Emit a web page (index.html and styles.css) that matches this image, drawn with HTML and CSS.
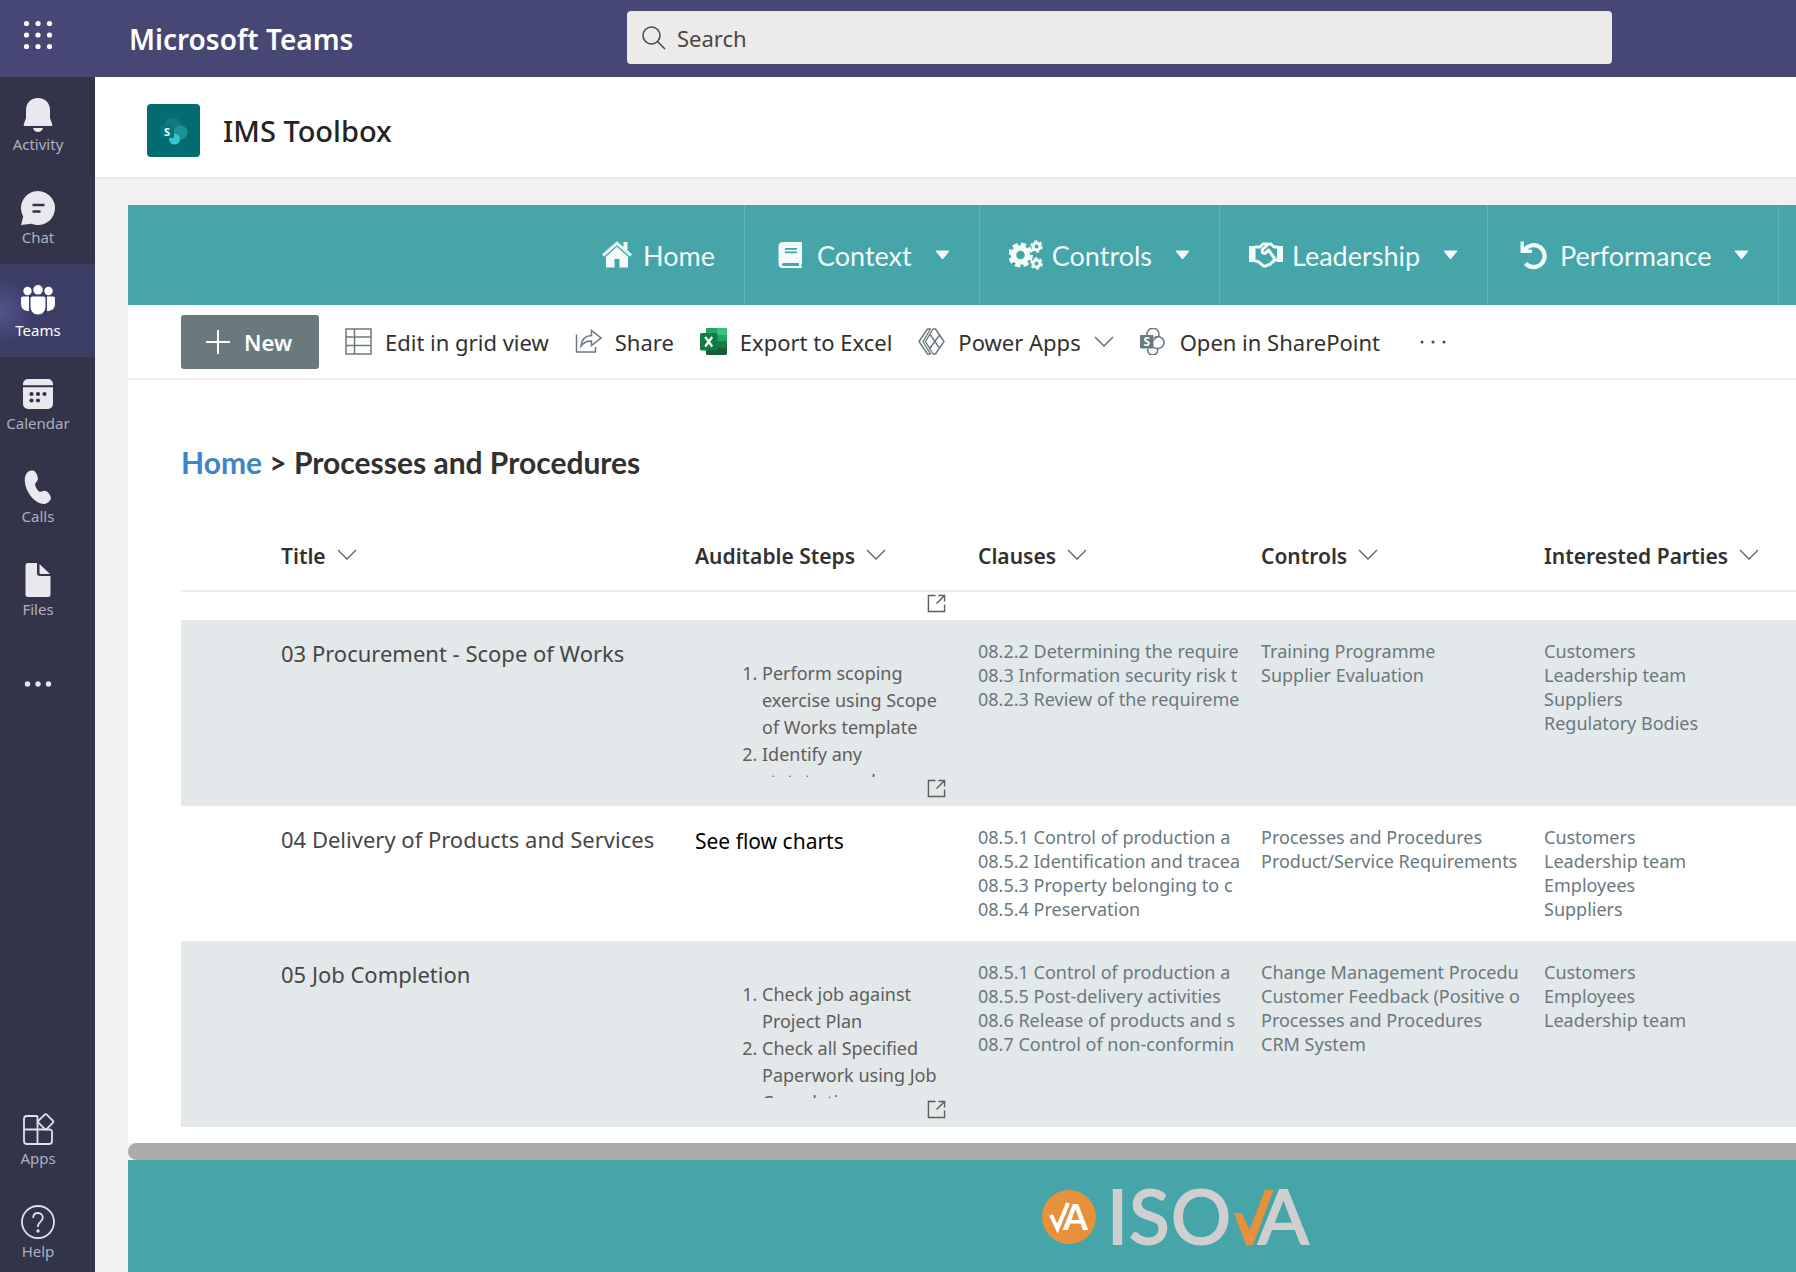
FILE: index.html
```html
<!DOCTYPE html>
<html lang="en">
<head>
<meta charset="utf-8">
<title>IMS Toolbox | Microsoft Teams</title>
<link rel="stylesheet" href="styles.css">
</head>
<body>
<svg class="defs" aria-hidden="true">
  <symbol id="chevron" viewBox="0 0 20 12"><path d="M1 1l9 9 9-9" fill="none" stroke="currentColor" stroke-width="1.3"/></symbol>
  <symbol id="caret" viewBox="0 0 15 10"><path d="M1 1h13L7.500 9z" fill="currentColor" stroke="currentColor" stroke-linejoin="round"/></symbol>
  <symbol id="popout" viewBox="0 0 20 20"><path d="M9 1.500H1.500v17h17V11M12 1.500h6.500V8M18.500 1.500L10 10" fill="none" stroke="currentColor" stroke-width="1.500"/></symbol>
</svg>
<header class="topbar">
  <button class="waffle" aria-label="App launcher">
    <svg width="30" height="30" viewBox="0 0 30 30" fill="#fff"><circle cx="3.500" cy="3.500" r="2.600"/><circle cx="15" cy="3.500" r="2.600"/><circle cx="26.500" cy="3.500" r="2.600"/><circle cx="3.500" cy="15" r="2.600"/><circle cx="15" cy="15" r="2.600"/><circle cx="26.500" cy="15" r="2.600"/><circle cx="3.500" cy="26.500" r="2.600"/><circle cx="15" cy="26.500" r="2.600"/><circle cx="26.500" cy="26.500" r="2.600"/></svg>
  </button>
  <div class="brand">Microsoft Teams</div>
  <label class="search">
    <svg width="24" height="24" viewBox="0 0 24 24" fill="none" stroke="#484644" stroke-width="1.500"><circle cx="9.500" cy="9.500" r="8.500"/><path d="M15.500 15.500L23 23"/></svg>
    <input type="text" placeholder="Search" aria-label="Search">
  </label>
</header>
<div class="shell">
  <nav class="rail" aria-label="Teams">
    <a class="rail-item" href="#"><svg viewBox="0 0 34 34"><path d="M17 0C9.500 0 5 5.500 5 12v8l-2.300 6.500Q2.300 28 4 28h26q1.700 0 1.300-1.500L29 20v-8C29 5.500 24.500 0 17 0zM12 30h10c-.7 2.600-2.500 4-5 4s-4.300-1.400-5-4z"/></svg><span>Activity</span></a>
    <a class="rail-item" href="#"><svg viewBox="0 0 34 34"><path d="M17 0a17 17 0 1 1-6.500 32.700L0 34l2.200-8.600A17 17 0 0 1 17 0z"/><path d="M11.500 14h12M11.500 20.500h8" stroke="#33344a" stroke-width="2.400"/></svg><span>Chat</span></a>
    <a class="rail-item active" href="#" aria-current="page"><svg viewBox="0 0 34 34"><circle cx="6.500" cy="7" r="4.200"/><circle cx="27.500" cy="7" r="4.200"/><circle cx="17" cy="5.800" r="4.800"/><path d="M1.500 12.500H8V27c-5 0-8-2.500-8-7v-5.500q0-2 1.500-2zM26 12.500h6.500q1.500 0 1.500 2V20c0 4.500-3 7-8 7zM11.500 12.500h11q2 0 2 2V22c0 5-3 8.500-7.500 8.500S9.500 27 9.500 22v-7.500q0-2 2-2z"/></svg><span>Teams</span></a>
    <a class="rail-item" href="#"><svg viewBox="0 0 34 34"><path d="M7 2h20a5 5 0 0 1 5 5v1.200H2V7a5 5 0 0 1 5-5zM2 10.200h30V27a5 5 0 0 1-5 5H7a5 5 0 0 1-5-5z"/><g fill="#33344a"><circle cx="10.500" cy="17" r="2.100"/><circle cx="17" cy="17" r="2.100"/><circle cx="23.500" cy="17" r="2.100"/><circle cx="10.500" cy="23.500" r="2.100"/><circle cx="17" cy="23.500" r="2.100"/></g></svg><span>Calendar</span></a>
    <a class="rail-item" href="#"><svg viewBox="0 0 34 34"><path d="M5.500 3.500C7 1 9.500 0 12 .5c2 .5 3 2 4 4.500 1.200 3 1.200 5-.5 7-1.500 1.600-1.700 2.500-1 4.300.8 2.200 2 4 3.300 5 1 .8 2 .6 3.500 0 2.500-1 4.500-.5 6 1.500 2.700 3.500 3.500 5.200 1.500 8-2 2.700-5 3.700-9 2.700C11.500 31 4.500 21 3.800 11c-.2-3 .4-5.500 1.700-7.500z"/></svg><span>Calls</span></a>
    <a class="rail-item" href="#"><svg viewBox="0 0 34 34"><path d="M6.500 0H16v10q0 3 3 3h10.500v18.500q0 2.500-2.500 2.500H7q-2.500 0-2.500-2.500v-29Q4.500 0 6.500 0z"/><path d="M18.500 1L29 11H19.500q-1 0-1-1z"/></svg><span>Files</span></a>
    <button class="rail-item" aria-label="More apps"><svg viewBox="0 0 34 34"><circle cx="6.500" cy="28" r="2.700"/><circle cx="17" cy="28" r="2.700"/><circle cx="27.500" cy="28" r="2.700"/></svg></button>
    <div class="rail-gap"></div>
    <a class="rail-item" href="#"><svg class="line" viewBox="0 0 34 34"><path d="M16.500 4H6a3 3 0 0 0-3 3v22a3 3 0 0 0 3 3h22a3 3 0 0 0 3-3V20a2.500 2.500 0 0 0-2.500-2.500H3M16.500 4v28"/><rect x="19" y="4" width="11.500" height="11.500" rx="1.500" transform="rotate(45 24.700 9.700)"/></svg><span>Apps</span></a>
    <a class="rail-item" href="#"><svg class="line" viewBox="0 0 34 34"><circle cx="17" cy="17" r="16"/><path d="M12.200 13c0-3 2-5 4.800-5s4.800 2 4.800 4.600c0 4-4.800 4.500-4.800 8.400v1"/><circle cx="17" cy="26" r=".8"/></svg><span>Help</span></a>
  </nav>
  <main class="main">
    <div class="app-head">
      <svg class="sp-tile" viewBox="0 0 53 53"><rect width="53" height="53" rx="4" fill="#036c70"/><circle cx="26" cy="22" r="8.500" fill="#12797c"/><circle cx="33.500" cy="28.500" r="7" fill="#1e9196"/><circle cx="27.500" cy="35" r="5.500" fill="#37c6d0"/><rect x="14" y="21" width="13" height="13" rx="1" fill="#03787c"/><text x="17" y="31.500" font-family="Noto Sans, sans-serif" font-weight="700" font-size="11" fill="#fff">S</text></svg>
      <h1>IMS Toolbox</h1>
    </div>
    <div class="page">
      <nav class="site-nav" aria-label="Site">
        <a href="#"><svg viewBox="0 0 34 34"><path d="M17 8.500L6 18v11.500h8.500V21h5v8.500H28V18z"/><path d="M3 18L17 5.500 31 18" fill="none" stroke="#45a5a8" stroke-width="5"/><path d="M3 17.500L17 5.300 31 17.500" fill="none" stroke="#e2f3f3" stroke-width="3"/><path d="M23.500 4h4v9l-4-3.500z"/></svg><span>Home</span></a>
        <a href="#"><svg viewBox="0 0 34 34"><path fill-rule="evenodd" d="M9 4h19v21q-1.200 2 0 4v1H9q-4.500 0-4.500-4.500v-17Q4.500 4 9 4zm2 6v1.700h12V10zm0 3.600v1.700h12v-1.700zM9.500 25q-1.500 0-1.500 1.500T9.500 28H25v-3z"/></svg><span>Context</span><svg class="caret"><use href="#caret"/></svg></a>
        <a href="#"><svg viewBox="0 0 34 34"><circle cx="11.500" cy="17" r="7" fill="none" stroke="#f2fafa" stroke-width="5.500"/><circle cx="11.500" cy="17" r="10.500" fill="none" stroke="#f2fafa" stroke-width="4" stroke-dasharray="5.200 3.050"/><g fill="none" stroke="#f2fafa"><circle cx="27.500" cy="8.500" r="3.500" stroke-width="3"/><circle cx="27.500" cy="8.500" r="5.300" stroke-width="2" stroke-dasharray="2.800 2.750"/><circle cx="27.500" cy="25.500" r="3.500" stroke-width="3"/><circle cx="27.500" cy="25.500" r="5.300" stroke-width="2" stroke-dasharray="2.800 2.750"/></g></svg><span>Controls</span><svg class="caret"><use href="#caret"/></svg></a>
        <a href="#"><svg viewBox="0 0 34 34"><g fill="none" stroke="#f2fafa" stroke-width="3" stroke-linejoin="round"><path d="M6 9h5l3-3h8l3 3h4M6 23l3 .5 5 4q2.500 1.500 4.500-.5 3 0 4-2.500 2.500-.5 2.500-2.500H29"/><path d="M19 6.500l-5.500 5q-1 3.500 1.500 3.800 2 0 4.500-3.300L26 21"/></g><path d="M0 8h6.500v16H0zM28 8h6v16h-6z"/></svg><span>Leadership</span><svg class="caret"><use href="#caret"/></svg></a>
        <a href="#"><svg viewBox="0 0 34 34"><path d="M7.500 12A11 11 0 1 1 8.500 25.500" fill="none" stroke="#f2fafa" stroke-width="4.200"/><path d="M3.500 3.500H7v8h8V15H3.500z"/></svg><span>Performance</span><svg class="caret"><use href="#caret"/></svg></a>
      </nav>
      <div class="toolbar">
        <button class="new"><svg width="24" height="24" viewBox="0 0 24 24"><path d="M12 0v24M0 12h24" stroke="#fff" stroke-width="2"/></svg>New</button>
        <button class="cmd"><svg viewBox="0 0 27 27"><path d="M1 1h25v25H1zM1 9h25M1 17.500h25M9.500 1v25" fill="none" stroke="#69797e" stroke-width="1.500"/></svg>Edit in grid view</button>
        <button class="cmd"><svg viewBox="0 0 27 27"><path d="M1.500 6.500V24H20.500v-5M6 18c.5-6 4-10 10.500-10.500V2.500L26 10l-9.500 7.500V13C12 13 8.500 14.500 6 18z" fill="none" stroke="#69797e" stroke-width="1.500"/></svg>Share</button>
        <button class="cmd"><svg viewBox="0 0 27 27"><rect x="6" width="21" height="27" rx="1.500" fill="#185c37"/><path d="M6 1.500Q6 0 7.500 0H17v7H6z" fill="#21a366"/><path d="M17 0h8.500Q27 0 27 1.500V7H17z" fill="#33c481"/><path d="M6 7h11v13H6zM17 13.500h10V20H17z" fill="#107c41"/><path d="M17 7h10v6.500H17z" fill="#21a366"/><rect y="5" width="17.500" height="17.500" rx="1.500" fill="#107c41"/><path d="M5.200 9l7 9.500M12.200 9l-7 9.500" stroke="#fff" stroke-width="2.300"/></svg>Export to Excel</button>
        <button class="cmd"><svg viewBox="0 0 27 27"><path d="M9.500 1h3L5 13.500 12.500 26h-3L1 13.500zM15 1h2.500l8.500 12.500L17.500 26H15L7.500 13.500zM12 6.500L21.500 20M21.500 7L12 20" fill="none" stroke="#69797e" stroke-width="1.400" stroke-linejoin="round"/></svg>Power Apps<svg class="chev"><use href="#chevron"/></svg></button>
        <button class="cmd"><svg viewBox="0 0 27 27"><g fill="none" stroke="#69797e" stroke-width="1.500"><path d="M7 7a6 6 0 1 1 11.500 1.500M14 10a6 6 0 1 1 4.500 10.500q-3 .5-5.500-1.500M8 20.500a5 5 0 1 0 9.500 0M18.500 8.500q-3.500 1-5 4"/></g><rect y="7" width="13.500" height="13.500" rx="1" fill="#69797e"/><text x="3.500" y="18" font-family="Noto Sans, sans-serif" font-weight="700" font-size="12" fill="#fff">S</text></svg>Open in SharePoint</button>
        <button class="more" aria-label="More commands"><svg width="26" height="6" viewBox="0 0 26 6" fill="#484644"><circle cx="2" cy="3" r="1.500"/><circle cx="13" cy="3" r="1.500"/><circle cx="24" cy="3" r="1.500"/></svg></button>
      </div>
      <h2 class="crumbs"><a href="#">Home</a> &gt; Processes and Procedures</h2>
      <div class="list">
        <table>
          <colgroup><col class="c-check"><col class="c-title"><col class="c-std"><col class="c-std"><col class="c-std"><col></colgroup>
          <thead>
            <tr><th></th><th>Title<svg class="chev"><use href="#chevron"/></svg></th><th>Auditable Steps<svg class="chev"><use href="#chevron"/></svg></th><th>Clauses<svg class="chev"><use href="#chevron"/></svg></th><th>Controls<svg class="chev"><use href="#chevron"/></svg></th><th>Interested Parties<svg class="chev"><use href="#chevron"/></svg></th></tr>
          </thead>
          <tbody>
            <tr class="tail"><td></td><td></td><td><button class="pop" aria-label="Show steps"><svg><use href="#popout"/></svg></button></td><td></td><td></td><td></td></tr>
            <tr class="tall shade"><td></td><td class="title">03 Procurement - Scope of Works</td>
              <td><div class="steps"><ol><li>Perform scoping exercise using Scope of Works template</li><li>Identify any statutory and</li></ol></div><button class="pop" aria-label="Show steps"><svg><use href="#popout"/></svg></button></td>
              <td><div class="lines">08.2.2 Determining the require<br>08.3 Information security risk t<br>08.2.3 Review of the requireme</div></td>
              <td><div class="lines">Training Programme<br>Supplier Evaluation</div></td>
              <td><div class="lines">Customers<br>Leadership team<br>Suppliers<br>Regulatory Bodies</div></td></tr>
            <tr class="short"><td></td><td class="title">04 Delivery of Products and Services</td>
              <td class="note">See flow charts</td>
              <td><div class="lines">08.5.1 Control of production a<br>08.5.2 Identification and tracea<br>08.5.3 Property belonging to c<br>08.5.4 Preservation</div></td>
              <td><div class="lines">Processes and Procedures<br>Product/Service Requirements</div></td>
              <td><div class="lines">Customers<br>Leadership team<br>Employees<br>Suppliers</div></td></tr>
            <tr class="tall shade"><td></td><td class="title">05 Job Completion</td>
              <td><div class="steps"><ol><li>Check job against Project Plan</li><li>Check all Specified Paperwork using Job Completion</li></ol></div><button class="pop" aria-label="Show steps"><svg><use href="#popout"/></svg></button></td>
              <td><div class="lines">08.5.1 Control of production a<br>08.5.5 Post-delivery activities<br>08.6 Release of products and s<br>08.7 Control of non-conformin</div></td>
              <td><div class="lines">Change Management Procedu<br>Customer Feedback (Positive o<br>Processes and Procedures<br>CRM System</div></td>
              <td><div class="lines">Customers<br>Employees<br>Leadership team</div></td></tr>
          </tbody>
        </table>
      </div>
      <div class="scroll"><div class="thumb"></div></div>
      <footer class="footer">
        <svg class="logo" width="268" height="58" viewBox="0 0 268 58" role="img" aria-label="ISOvA">
          <circle cx="27" cy="29" r="27" fill="#e8913c"/>
          <path d="M9 27l6.500 13.500L26 15" fill="none" stroke="#fff" stroke-width="4"/>
          <text x="21" y="42" font-family="Lato, sans-serif" font-weight="700" font-size="36" fill="#fff">A</text>
          <g font-family="Lato, sans-serif" font-size="75" fill="#cfcfcf" stroke="#cfcfcf" stroke-width="2"><text x="65" y="56">I</text><text x="87" y="56">S</text><text x="129" y="56">O</text><text x="216" y="56">A</text></g>
          <path d="M192 25h7.500l8 17L223 2h8.500L211 57h-7z" fill="#e8913c"/>
        </svg>
      </footer>
    </div>
  </main>
</div>
</body>
</html>
```
FILE: styles.css
```css
* { box-sizing: border-box; }
body {
  margin: 0;
  min-height: 100vh;
  display: flex;
  flex-direction: column;
  overflow-x: hidden;
  font-family: "Noto Sans", "Open Sans", sans-serif;
  color: #323130;
  background: #f3f2f1;
}
a { color: inherit; text-decoration: none; }
button {
  font: inherit;
  color: inherit;
  background: none;
  border: 0;
  padding: 0;
}
svg { flex: none; }
.defs { display: none; }

.topbar {
  display: flex;
  height: 77px;
  background: #464775;
}
.waffle {
  width: 95px;
  height: 69px;
  padding-right: 19px;
  display: flex;
  align-items: center;
  justify-content: center;
}
.brand {
  width: 532px;
  padding-left: 34px;
  line-height: 79px;
  font-size: 28px;
  font-weight: 600;
  color: #fff;
}
.search {
  display: flex;
  align-items: center;
  gap: 11px;
  flex: 1;
  height: 53px;
  margin: 11px 184px 0 0;
  padding: 0 15px;
  border-radius: 4px;
  background: #edebe9;
}
.search input {
  flex: 1;
  min-width: 0;
  border: 0;
  padding: 0;
  outline: 0;
  background: none;
  font: 22px "Noto Sans", sans-serif;
  color: #484644;
}
.search input::placeholder { color: #484644; opacity: 1; }

.shell { display: flex; flex: 1; }
.rail {
  display: flex;
  flex-direction: column;
  width: 95px;
  flex: none;
  padding-top: 1px;
  background: #33344a;
}
.rail-item {
  display: flex;
  flex-direction: column;
  align-items: center;
  height: 93px;
  padding: 20px 19px 0 0;
  font-size: 15px;
  line-height: 24px;
  color: #b0b0bd;
}
.rail-item:last-child { height: 88px; }
.rail-item svg { width: 34px; height: 34px; fill: #e8e8ee; }
.rail-item .line { fill: none; stroke: #e0e0e8; stroke-width: 1.800; }
.rail-item.active {
  color: #fff;
  background: radial-gradient(circle at 0 50%, #52538c 0, #3d3e66 34px);
}
.rail-item.active svg { fill: #fff; }
.rail-gap { flex: 1; }

.main { flex: 1; min-width: 0; display: flex; flex-direction: column; }
.app-head {
  display: flex;
  align-items: center;
  gap: 23px;
  height: 102px;
  padding-left: 52px;
  padding-top: 6px;
  background: #fff;
  border-bottom: 2px solid #edebe9;
}
.sp-tile { width: 53px; height: 53px; }
.app-head h1 { margin: 0; font-size: 29px; font-weight: 500; color: #252423; }

.page {
  flex: 1;
  display: flex;
  flex-direction: column;
  margin: 26px 0 0 33px;
  background: #fff;
}
.site-nav {
  display: flex;
  height: 100px;
  padding-left: 443px;
  overflow: hidden;
  background: #45a5a8;
  font: 27px Lato, sans-serif;
  color: #f2fafa;
}
.site-nav a {
  display: flex;
  align-items: center;
  gap: 9px;
  padding: 0 29px;
  border-right: 1px solid #5eb3b6;
}
.site-nav svg { width: 34px; height: 34px; fill: #f2fafa; }
.site-nav .caret { width: 15px; height: 10px; margin-left: 14px; }

.toolbar {
  display: flex;
  align-items: center;
  gap: 26px;
  height: 75px;
  padding-left: 53px;
  border-bottom: 2px solid #f0efee;
  font-size: 22px;
  white-space: nowrap;
}
.new {
  display: flex;
  align-items: center;
  gap: 14px;
  height: 54px;
  width: 138px;
  padding-left: 25px;
  border-radius: 3px;
  background: #69797e;
  color: #fff;
  font-weight: 600;
}
.cmd { display: flex; align-items: center; gap: 13px; }
.cmd svg { width: 27px; height: 27px; }
.toolbar .chev, .list .chev { width: 20px; height: 12px; color: #605e5c; }
.more { display: flex; padding-left: 14px; }

.crumbs {
  margin: 63px 0 0 53px;
  font: 700 30px/38px Lato, sans-serif;
}
.crumbs a { color: #3d85c9; }

.list { padding: 40px 0 16px 53px; }
table {
  width: 100%;
  table-layout: fixed;
  border-collapse: collapse;
}
.c-check { width: 100px; }
.c-title { width: 414px; }
.c-std { width: 283px; }
th {
  height: 70px;
  padding: 0;
  border-bottom: 2px solid #edebe9;
  text-align: left;
  white-space: nowrap;
  font-size: 21px;
  font-weight: 600;
}
th .chev { margin-left: 11px; vertical-align: 3px; }
td { padding: 0 20px 0 0; vertical-align: top; }
.tail td { height: 29px; }
.tall td { height: 186px; }
.short td { height: 135px; }
.shade { background: #e3e8ea; }
td.title {
  padding-top: 18px;
  font-size: 22px;
  line-height: 30px;
  color: #484644;
  white-space: nowrap;
}
td.note {
  padding-top: 20px;
  font-size: 21px;
  line-height: 30px;
  color: #000;
}
.lines {
  padding-top: 19px;
  overflow: hidden;
  white-space: nowrap;
  font-size: 18px;
  line-height: 24px;
  color: #69797e;
}
.steps {
  height: 157px;
  padding: 40px 18px 0 0;
  overflow: hidden;
  font-size: 18px;
  line-height: 27px;
  color: #605e5c;
}
.steps ol { margin: 0; padding-left: 67px; }
.pop { display: block; margin: 2px 0 0 232px; color: #605e5c; }
.pop svg { display: block; width: 19px; height: 19px; }

.scroll { height: 17px; background: #f3f2f1; overflow: hidden; }
.thumb { height: 17px; border-radius: 9px 0 0 9px; background: #ababab; }
.footer {
  flex: 1;
  display: flex;
  align-items: center;
  justify-content: center;
  min-height: 113px;
  padding-left: 428px;
  background: #45a5a8;
}
```
